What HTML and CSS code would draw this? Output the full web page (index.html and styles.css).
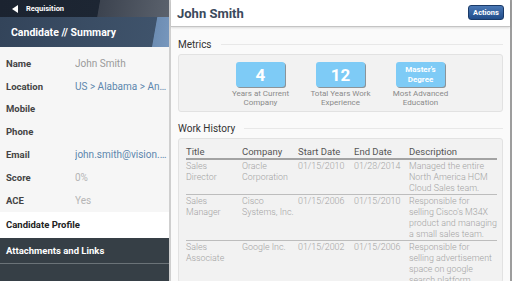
FILE: index.html
```html
<!DOCTYPE html>
<html lang="en">
<head>
    <meta charset="UTF-8">
    <title>Candidate Summary</title>
    <link rel="stylesheet" href="styles.css">
</head>
<body>
    <div class="sidebar">
        <div class="topbar"><span class="back-arrow"></span>Requisition</div>
        <div class="titlebar">Candidate // Summary</div>
        <div class="details">
            <div class="detail-row"><span class="label">Name</span><span class="value">John Smith</span></div>
            <div class="detail-row"><span class="label">Location</span><span class="value link">US &gt; Alabama &gt; Annapolis</span></div>
            <div class="detail-row"><span class="label">Mobile</span><span class="value"></span></div>
            <div class="detail-row"><span class="label">Phone</span><span class="value"></span></div>
            <div class="detail-row"><span class="label">Email</span><span class="value link">john.smith@vision.example.com</span></div>
            <div class="detail-row"><span class="label">Score</span><span class="value light">0%</span></div>
            <div class="detail-row"><span class="label">ACE</span><span class="value light">Yes</span></div>
        </div>
        <div class="nav">
            <div class="nav-item active">Candidate Profile</div>
            <div class="nav-item">Attachments and Links</div>
        </div>
    </div>
    <div class="main">
        <div class="header">
            <h1>John Smith</h1>
            <button class="actions-btn">Actions</button>
        </div>
        <div class="content">
            <div class="section-title">Metrics</div>
            <div class="metrics-box">
                <div class="metric">
                    <div class="tile">4</div>
                    <div class="caption">Years at Current<br>Company</div>
                </div>
                <div class="metric">
                    <div class="tile">12</div>
                    <div class="caption">Total Years Work<br>Experience</div>
                </div>
                <div class="metric">
                    <div class="tile small">Master's<br>Degree</div>
                    <div class="caption">Most Advanced<br>Education</div>
                </div>
            </div>
            <div class="section-title">Work History</div>
            <div class="history-box">
                <table class="history">
                    <thead>
                        <tr><th class="c1">Title</th><th class="c2">Company</th><th class="c3">Start Date</th><th class="c4">End Date</th><th>Description</th></tr>
                    </thead>
                    <tbody>
                        <tr><td>Sales<br>Director</td><td>Oracle<br>Corporation</td><td>01/15/2010</td><td>01/28/2014</td><td>Managed the entire<br>North America HCM<br>Cloud Sales team.</td></tr>
                        <tr><td>Sales<br>Manager</td><td>Cisco<br>Systems, Inc.</td><td>01/15/2006</td><td>01/15/2010</td><td>Responsible for<br>selling Cisco's M34X<br>product and managing<br>a small sales team.</td></tr>
                        <tr><td>Sales<br>Associate</td><td>Google Inc.</td><td>01/15/2002</td><td>01/15/2006</td><td>Responsible for<br>selling advertisement<br>space on google<br>search platform.</td></tr>
                    </tbody>
                </table>
            </div>
        </div>
    </div>
</body>
</html>
```

FILE: styles.css
```css
/* Reset */
* {
    margin: 0;
    padding: 0;
    box-sizing: border-box;
}
body {
    font-family: Roboto, "Liberation Sans", sans-serif;
    width: 512px;
    height: 281px;
    overflow: hidden;
    display: flex;
    background: #fafafa;
}

/* Sidebar */
.sidebar {
    width: 171px;
    flex-shrink: 0;
    display: flex;
    flex-direction: column;
    background: #f6f6f6;
    border-right: 2px solid #cfcfcf;
}
.topbar {
    height: 17px;
    flex-shrink: 0;
    display: flex;
    align-items: center;
    padding-left: 12px;
    font-size: 7.5px;
    font-weight: bold;
    color: #fff;
    background: linear-gradient(100deg, #1b2330 0, #1d2633 58%, #3c434f 58.5%, #5b626d 100%);
}
.back-arrow {
    width: 0;
    height: 0;
    border-top: 4px solid transparent;
    border-bottom: 4px solid transparent;
    border-right: 6px solid #fff;
    margin-right: 8px;
}
.titlebar {
    height: 30px;
    flex-shrink: 0;
    display: flex;
    align-items: center;
    padding-left: 11px;
    font-size: 10.5px;
    font-weight: bold;
    color: #fff;
    background: linear-gradient(100deg, #33445a 0, #3f536b 90%, #6d8db3 90.5%, #7797bd 100%);
}
.details {
    padding-top: 5px;
    flex-shrink: 0;
}
.detail-row {
    height: 22.8px;
    display: flex;
    align-items: center;
    padding-left: 6px;
    font-size: 10px;
}
.label {
    width: 69px;
    flex-shrink: 0;
    font-size: 9.5px;
    font-weight: bold;
    color: #444;
}
.value {
    flex: 1;
    min-width: 0;
    padding-right: 2px;
    color: #9a9a9a;
    white-space: nowrap;
    overflow: hidden;
    text-overflow: ellipsis;
}
.value.link {
    color: #5c86ad;
}
.value.light {
    color: #b5b5b5;
}
.nav {
    flex: 1;
    background: #363f46;
}
.nav-item {
    height: 26px;
    display: flex;
    align-items: center;
    padding-left: 6px;
    font-size: 9.5px;
    font-weight: bold;
    color: #fff;
    border-bottom: 1px solid #6b7378;
}
.nav-item.active {
    background: #fff;
    color: #222;
    border-bottom: none;
}

/* Main */
.main {
    flex: 1;
    min-width: 0;
    display: flex;
    flex-direction: column;
    border-right: 2px solid #9d9d9d;
}
.header {
    height: 27px;
    flex-shrink: 0;
    display: flex;
    align-items: center;
    justify-content: space-between;
    padding: 0 6px;
    background: #fff;
    border-bottom: 1px solid #c4c4c4;
    box-shadow: 0 1px 2px rgba(0, 0, 0, 0.12);
}
.header h1 {
    font-size: 13px;
    color: #3b4a5c;
}
.actions-btn {
    font-family: inherit;
    width: 36px;
    height: 15px;
    font-size: 7.5px;
    font-weight: bold;
    color: #fff;
    border: 1px solid #1a3a68;
    border-radius: 3px;
    background: linear-gradient(#4a78b5, #214d8a);
    margin-bottom: 1px;
}
.content {
    padding: 11px 7px 0 7px;
}
.section-title {
    display: flex;
    align-items: center;
    font-size: 10px;
    color: #333;
    height: 12px;
    margin-bottom: 4px;
}
.section-title::after {
    content: "";
    flex: 1;
    height: 1px;
    background: #e8e8e8;
    margin-left: 9px;
}
.metrics-box {
    height: 58px;
    display: flex;
    justify-content: center;
    padding-top: 7px;
    background: #f2f2f2;
    border: 1px solid #e2e2e2;
    border-radius: 3px;
    margin-bottom: 10px;
}
.metric {
    width: 80px;
    display: flex;
    flex-direction: column;
    align-items: center;
}
.tile {
    width: 49px;
    height: 25px;
    display: flex;
    align-items: center;
    justify-content: center;
    text-align: center;
    font-size: 17px;
    font-weight: bold;
    color: #fff;
    background: #7ecbf6;
    border-radius: 3px;
    box-shadow: 1px 1px 0 #8c9499;
}
.tile.small {
    font-size: 8px;
    line-height: 10px;
}
.caption {
    margin-top: 2px;
    font-size: 8px;
    line-height: 9px;
    text-align: center;
    color: #8a8a8a;
}
.history-box {
    background: #f2f2f2;
    border: 1px solid #e2e2e2;
    border-radius: 3px;
    padding: 6px 5px 0 7px;
    height: 145px;
    overflow: hidden;
}
.history {
    width: 100%;
    border-collapse: collapse;
    table-layout: fixed;
    font-size: 8.9px;
}
.history th {
    text-align: left;
    font-size: 9.5px;
    font-weight: normal;
    color: #555;
    height: 14px;
    padding-bottom: 1px;
    border-bottom: 2px solid #a3a3a3;
}
.history td {
    vertical-align: top;
    font-weight: 300;
    color: #a3a3a3;
    line-height: 11px;
    padding: 1px 0 0;
    white-space: nowrap;
    border-bottom: 1px solid #bdbdbd;
}
.c1, .c2, .c3 {
    width: 56px;
}
.c4 {
    width: 55px;
}
```
